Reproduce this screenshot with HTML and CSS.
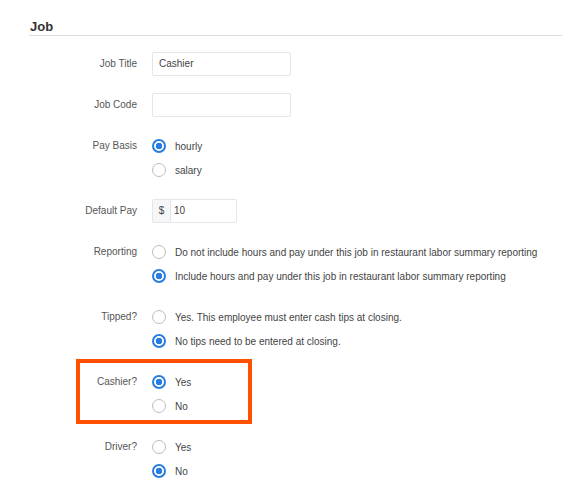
FILE: index.html
```html
<!DOCTYPE html>
<html>
<head>
<meta charset="utf-8">
<link rel="stylesheet" href="styles.css">
</head>
<body>
<div class="page">
  <h2 class="section-title">Job</h2>
  <div class="form">
    <div class="row">
      <div class="label">Job Title</div>
      <div class="control"><div class="input w-title">Cashier</div></div>
    </div>
    <div class="row">
      <div class="label">Job Code</div>
      <div class="control"><div class="input w-title"></div></div>
    </div>
    <div class="row">
      <div class="label">Pay Basis</div>
      <div class="control">
        <div class="option"><span class="radio checked"></span>hourly</div>
        <div class="option"><span class="radio"></span>salary</div>
      </div>
    </div>
    <div class="row">
      <div class="label">Default Pay</div>
      <div class="control">
        <div class="input-group"><span class="addon">$</span><span class="value">10</span></div>
      </div>
    </div>
    <div class="row">
      <div class="label">Reporting</div>
      <div class="control">
        <div class="option"><span class="radio"></span>Do not include hours and pay under this job in restaurant labor summary reporting</div>
        <div class="option"><span class="radio checked"></span>Include hours and pay under this job in restaurant labor summary reporting</div>
      </div>
    </div>
    <div class="row">
      <div class="label">Tipped?</div>
      <div class="control">
        <div class="option"><span class="radio"></span>Yes. This employee must enter cash tips at closing.</div>
        <div class="option"><span class="radio checked"></span>No tips need to be entered at closing.</div>
      </div>
    </div>
    <div class="row highlighted">
      <div class="label">Cashier?</div>
      <div class="control">
        <div class="option"><span class="radio checked"></span>Yes</div>
        <div class="option"><span class="radio"></span>No</div>
      </div>
      <div class="highlight-box"></div>
    </div>
    <div class="row">
      <div class="label">Driver?</div>
      <div class="control">
        <div class="option"><span class="radio"></span>Yes</div>
        <div class="option"><span class="radio checked"></span>No</div>
      </div>
    </div>
  </div>
</div>
</body>
</html>
```
FILE: styles.css
```css
html, body {
  margin: 0;
  padding: 0;
  background: #ffffff;
}
body {
  font-family: "Liberation Sans", Arial, sans-serif;
  font-size: 10px;
  color: #4a4a4a;
}
.page {
  padding: 19px 0 0 29px;
}
.section-title {
  margin: 0;
  font-size: 13px;
  font-weight: bold;
  color: #333333;
  line-height: 15px;
  padding-left: 1px;
  padding-bottom: 1px;
  border-bottom: 1px solid #dcdce3;
}
.form {
  display: flex;
  flex-direction: column;
  gap: 17px;
  padding-top: 16px;
}
.row {
  display: flex;
  align-items: flex-start;
}
.label {
  width: 108px;
  flex: none;
  text-align: right;
  line-height: 24px;
  color: #555555;
}
.control {
  margin-left: 15px;
  display: flex;
  flex-direction: column;
}
.input {
  box-sizing: border-box;
  height: 24px;
  border: 1px solid #e6e6ea;
  border-radius: 2px;
  padding: 0 6px;
  line-height: 22px;
  color: #444444;
}
.w-title {
  width: 139px;
}
.input-group {
  box-sizing: border-box;
  display: flex;
  width: 85px;
  height: 24px;
  border: 1px solid #e6e6ea;
  border-radius: 2px;
  line-height: 22px;
  color: #444444;
}
.addon {
  width: 17px;
  text-align: center;
  background: #f5f6f8;
  border-right: 1px solid #e6e6ea;
}
.value {
  padding-left: 3px;
}
.option {
  display: flex;
  align-items: center;
  height: 24px;
  color: #444444;
}
.radio {
  box-sizing: border-box;
  width: 14px;
  height: 14px;
  border-radius: 50%;
  border: 1.3px solid #bdbdbd;
  margin-right: 9px;
  flex: none;
  background: #ffffff;
}
.radio.checked {
  border: 2px solid #2a7de0;
  background: radial-gradient(circle, #2a7de0 0 3px, #ffffff 3.6px);
}
.highlighted {
  position: relative;
}
.highlight-box {
  position: absolute;
  left: 47px;
  top: -11px;
  width: 176px;
  height: 65px;
  box-sizing: border-box;
  border: 4px solid #ff5000;
}
```
